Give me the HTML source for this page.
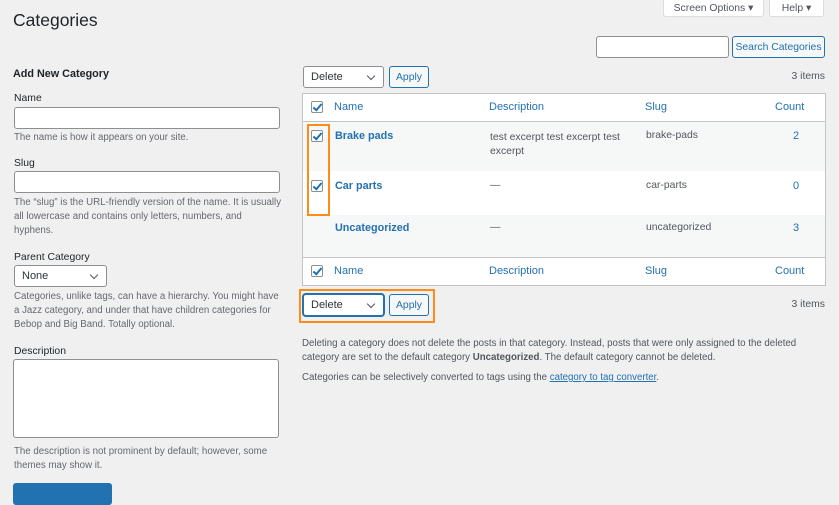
<!DOCTYPE html>
<html><head><meta charset="utf-8"><style>
*{box-sizing:border-box;margin:0;padding:0}
body{width:839px;height:490px;overflow:hidden;background:#f0f0f1;font-family:"Liberation Sans",sans-serif;font-size:10.4px;color:#3c434a;position:relative}
.a{position:absolute}
.inp{position:absolute;background:#fff;border:1px solid #8c8f94;border-radius:3px}
.btn{position:absolute;border:1px solid #2271b1;color:#2271b1;background:#f6f7f7;border-radius:3px;text-align:center;font-size:10.4px}
.help{color:#646970;line-height:14px;font-size:9.7px;white-space:nowrap}
.lbl{font-size:10.4px;color:#1d2327}
.sel{position:absolute;background:#fff;border:1px solid #8c8f94;border-radius:3px;font-size:11px;color:#2c3338;padding:4px 7px}
.sel:after{content:"";position:absolute;right:9px;top:6px;width:5px;height:5px;border-right:1.5px solid #50575e;border-bottom:1.5px solid #50575e;transform:rotate(45deg)}
.cb{position:absolute;width:12px;height:12px;border:1px solid #8c8f94;border-radius:2px;background:#fff}
.cb:after{content:"";position:absolute;left:3px;top:0px;width:3px;height:7px;border-right:2px solid #2271b1;border-bottom:2px solid #2271b1;transform:rotate(40deg)}
.th{color:#2271b1;font-size:11px}
.nm{color:#2271b1;font-weight:bold;font-size:10.8px}
.td{color:#50575e;font-size:10.4px;white-space:nowrap}
</style></head><body>
<div class="a" style="left:13px;top:10px;font-size:17.5px;color:#1d2327">Categories</div>
<div class="a" style="left:663px;top:-4px;width:101px;height:21px;background:#fff;border:1px solid #dcdcde;border-radius:3px;text-align:center;padding-top:5px;color:#50575e">Screen Options ▾</div>
<div class="a" style="left:769px;top:-4px;width:55px;height:21px;background:#fff;border:1px solid #dcdcde;border-radius:3px;text-align:center;padding-top:5px;color:#50575e">Help ▾</div>
<div class="inp" style="left:596px;top:36px;width:133px;height:22px"></div>
<div class="btn" style="left:732px;top:36px;width:93px;height:22px;padding-top:5px">Search Categories</div>

<div class="a" style="left:13px;top:68px;font-weight:bold;font-size:10.8px;color:#1d2327">Add New Category</div>
<div class="a lbl" style="left:14px;top:93px">Name</div>
<div class="inp" style="left:14px;top:107px;width:266px;height:22px"></div>
<div class="a help" style="left:14px;top:131px">The name is how it appears on your site.</div>
<div class="a lbl" style="left:14px;top:158px">Slug</div>
<div class="inp" style="left:14px;top:171px;width:266px;height:22px"></div>
<div class="a help" style="left:14px;top:196px">The “slug” is the URL-friendly version of the name. It is usually<br>all lowercase and contains only letters, numbers, and<br>hyphens.</div>
<div class="a lbl" style="left:14px;top:252px">Parent Category</div>
<div class="sel" style="left:14px;top:265px;width:93px;height:22px">None</div>
<div class="a help" style="left:14px;top:290px">Categories, unlike tags, can have a hierarchy. You might have<br>a Jazz category, and under that have children categories for<br>Bebop and Big Band. Totally optional.</div>
<div class="a lbl" style="left:14px;top:346px">Description</div>
<div class="inp" style="left:13px;top:359px;width:266px;height:79px"></div>
<div class="a help" style="left:14px;top:445px">The description is not prominent by default; however, some<br>themes may show it.</div>
<div class="a" style="left:13px;top:483px;width:99px;height:22px;background:#2271b1;border-radius:3px"></div>

<div class="sel" style="left:303px;top:66px;width:81px;height:22px">Delete</div>
<div class="btn" style="left:389px;top:66px;width:40px;height:22px;padding-top:5px">Apply</div>
<div class="a" style="right:14px;top:71px;color:#50575e">3 items</div>

<div class="a" style="left:302px;top:93px;width:524px;height:193px;background:#fff;border:1px solid #c3c4c7"></div>
<div class="a" style="left:303px;top:121px;width:522px;height:1px;background:#c3c4c7"></div>
<div class="a" style="left:303px;top:122px;width:522px;height:49px;background:#f6f7f7"></div>
<div class="a" style="left:303px;top:215px;width:522px;height:42px;background:#f6f7f7"></div>
<div class="a" style="left:303px;top:257px;width:522px;height:1px;background:#c3c4c7"></div>

<div class="cb" style="left:311px;top:101px"></div>
<div class="a th" style="left:334px;top:101px">Name</div>
<div class="a th" style="left:489px;top:101px">Description</div>
<div class="a th" style="left:645px;top:101px">Slug</div>
<div class="a th" style="left:775px;top:101px">Count</div>

<div class="cb" style="left:311px;top:130px"></div>
<div class="a nm" style="left:335px;top:130px">Brake pads</div>
<div class="a td" style="left:490px;top:131px;line-height:14px">test excerpt test excerpt test<br>excerpt</div>
<div class="a td" style="left:646px;top:130px">brake-pads</div>
<div class="a th" style="left:793px;top:130px">2</div>

<div class="cb" style="left:311px;top:180px"></div>
<div class="a nm" style="left:335px;top:180px">Car parts</div>
<div class="a td" style="left:490px;top:180px">—</div>
<div class="a td" style="left:646px;top:180px">car-parts</div>
<div class="a th" style="left:793px;top:180px">0</div>

<div class="a nm" style="left:335px;top:222px">Uncategorized</div>
<div class="a td" style="left:490px;top:222px">—</div>
<div class="a td" style="left:646px;top:222px">uncategorized</div>
<div class="a th" style="left:793px;top:222px">3</div>

<div class="cb" style="left:311px;top:265px"></div>
<div class="a th" style="left:334px;top:265px">Name</div>
<div class="a th" style="left:489px;top:265px">Description</div>
<div class="a th" style="left:645px;top:265px">Slug</div>
<div class="a th" style="left:775px;top:265px">Count</div>

<div class="a" style="left:307px;top:124px;width:23px;height:92px;border:2px solid #ff8c1a"></div>

<div class="sel" style="left:303px;top:294px;width:81px;height:22px;border-color:#2271b1;box-shadow:0 0 0 1px #2271b1">Delete</div>
<div class="btn" style="left:389px;top:294px;width:40px;height:22px;padding-top:5px">Apply</div>
<div class="a" style="left:299px;top:289px;width:136px;height:34px;border:2px solid #ff8c1a"></div>
<div class="a" style="right:14px;top:299px;color:#50575e">3 items</div>

<div class="a help" style="left:302px;top:337px;color:#50575e">Deleting a category does not delete the posts in that category. Instead, posts that were only assigned to the deleted<br>category are set to the default category <b>Uncategorized</b>. The default category cannot be deleted.</div>
<div class="a help" style="left:302px;top:371px;color:#50575e">Categories can be selectively converted to tags using the <span style="color:#2271b1;text-decoration:underline">category to tag converter</span>.</div>
</body></html>
